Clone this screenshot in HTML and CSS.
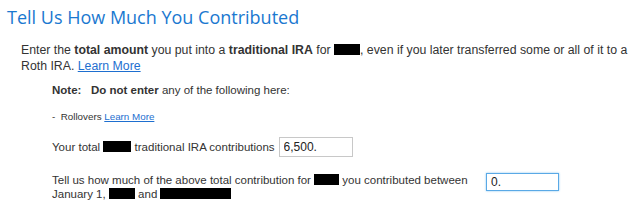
FILE: index.html
```html
<!DOCTYPE html>
<html lang="en">
<head>
    <meta charset="UTF-8">
    <title>Tell Us How Much You Contributed</title>
    <link rel="stylesheet" href="styles.css">
</head>
<body>
    <h1 class="title">Tell Us How Much You Contributed</h1>

    <p class="intro">
        Enter the <b>total amount</b> you put into a <b>traditional IRA</b> for <span class="redact r-year"></span>, even if you later transferred some or all of it to a Roth IRA. <a href="#">Learn More</a>
    </p>

    <div class="details">
        <p class="note"><b>Note:</b>&nbsp;&nbsp; <b>Do not enter</b> any of the following here:</p>

        <p class="item">- &nbsp;Rollovers <a href="#">Learn More</a></p>

        <div class="row">
            <label>Your total <span class="redact r-year2"></span> traditional IRA contributions</label>
            <input class="field" type="text" value="6,500.">
        </div>

        <div class="row row-split">
            <label class="split-label">Tell us how much of the above total contribution for <span class="redact r-year3"></span> you contributed between January 1, <span class="redact r-year4"></span> and <span class="redact r-date"></span></label>
            <input class="field field-focus" type="text" value="0.">
        </div>
    </div>
</body>
</html>
```

FILE: styles.css
```css
body {
    margin: 0;
    padding: 0 7px;
    font-family: "Liberation Sans", Arial, sans-serif;
    color: #333;
    background: #fff;
}

a {
    color: #1e6fd0;
}

.title {
    margin: 5px 0 0;
    font-family: "Open Sans", "Noto Sans", sans-serif;
    font-weight: 400;
    font-size: 18px;
    line-height: 24px;
    color: #1a78d0;
}

.intro {
    margin: 13px 0 0 14px;
    font-size: 12.3px;
    line-height: 16px;
}

.redact {
    display: inline-block;
    background: #000;
    height: 11px;
    vertical-align: -1px;
}

.r-year { width: 26px; }
.r-year2 { width: 28px; }
.r-year3 { width: 25px; }
.r-year4 { width: 26px; }
.r-date { width: 71px; }

.details {
    padding-left: 45px;
    font-size: 11.5px;
}

.note {
    margin: 8px 0 0;
    line-height: 16px;
}

.item {
    margin: 12px 0 0;
    font-size: 9.8px;
    line-height: 14px;
}

.row {
    display: flex;
    align-items: center;
    gap: 4px;
    margin-top: 13px;
}

.field {
    width: 64px;
    height: 14px;
    padding: 2px 4px;
    border: 1px solid #c8c8c8;
    font-family: "Liberation Sans", Arial, sans-serif;
    font-size: 12px;
    color: #222;
    margin: 0;
}

.row-split {
    align-items: flex-start;
    margin-top: 16px;
}

.split-label {
    width: 425px;
    line-height: 14px;
}

.field-focus {
    width: 63px;
    height: 12px;
    margin-left: 5px;
    border: 1px solid #5aa9e6;
    box-shadow: 0 0 2px #8cc6f0;
}
```
